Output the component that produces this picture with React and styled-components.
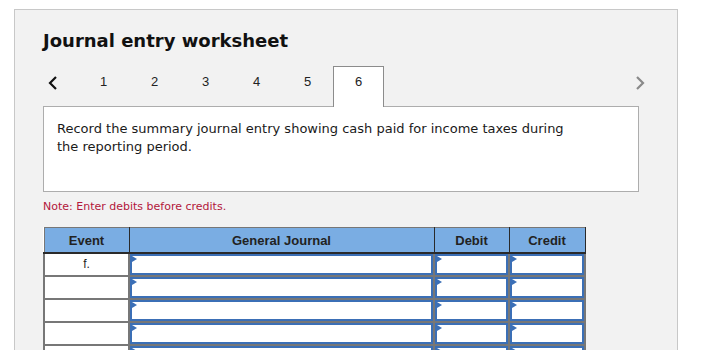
import React from "react";
import styled, { createGlobalStyle } from "styled-components";

const GlobalStyle = createGlobalStyle`
  html, body {
    margin: 0;
    padding: 0;
    overflow: hidden;
    background: #ffffff;
  }
`;

const Page = styled.div`
  padding: 9px 0 0 14px;
`;

const Panel = styled.div`
  width: 664px;
  height: 420px;
  box-sizing: border-box;
  border: 1px solid #c8c8c8;
  background: #f2f2f2;
  padding: 20px 0 0 28px;
`;

const Title = styled.h1`
  margin: 0;
  font-family: "DejaVu Sans", Verdana, sans-serif;
  font-size: 18px;
  line-height: 22px;
  font-weight: bold;
  color: #111;
`;

const TabRow = styled.div`
  display: flex;
  align-items: flex-start;
  margin-top: 14px;
  height: 40px;
  position: relative;
  z-index: 1;
`;

const Arrow = styled.button`
  border: none;
  background: none;
  padding: 0;
  width: 35px;
  height: 40px;
  display: flex;
  align-items: flex-start;
  padding-top: 10px;
  padding-left: ${(p) => (p.$right ? "0" : "4px")};
  box-sizing: border-box;
  cursor: pointer;
`;

const Tabs = styled.div`
  display: flex;
  width: 556px;
`;

const Tab = styled.div`
  width: 51px;
  height: ${(p) => (p.$active ? "41px" : "40px")};
  box-sizing: border-box;
  padding-top: 7px;
  text-align: center;
  font-family: "Liberation Sans", Arial, sans-serif;
  font-size: 13px;
  line-height: 16px;
  color: #222;
  border: 1px solid ${(p) => (p.$active ? "#8c8c8c" : "transparent")};
  border-bottom: none;
  background: ${(p) => (p.$active ? "#ffffff" : "transparent")};
`;

const Question = styled.div`
  width: 596px;
  height: 86px;
  box-sizing: border-box;
  border: 1px solid #adadad;
  background: #ffffff;
  padding: 13px 60px 0 13px;
  font-family: "DejaVu Sans", Verdana, sans-serif;
  font-size: 13px;
  line-height: 18px;
  color: #1a1a1a;
`;

const Note = styled.p`
  margin: 8px 0 0;
  font-family: "DejaVu Sans", Verdana, sans-serif;
  font-size: 11px;
  line-height: 14px;
  color: #b3163b;
`;

const Table = styled.table`
  margin-top: 13px;
  border-collapse: collapse;
  border: 1px solid #777;
  background: #ffffff;
  font-family: "Liberation Sans", Arial, sans-serif;
`;

const Th = styled.th`
  width: ${(p) => p.$w}px;
  height: 24px;
  padding: 0;
  background: #7aade3;
  border-right: 1px solid #2a2a2a;
  border-bottom: 2px solid #2a2a2a;
  font-size: 13px;
  font-weight: bold;
  color: #222;
`;

const Td = styled.td`
  height: 21px;
  padding: 0;
  border: 2px solid #777;
  font-size: 12px;
  text-align: center;
  color: #222;
  vertical-align: top;
`;

const EventCell = styled.div`
  height: 21px;
  line-height: 21px;
`;

const Field = styled.div`
  position: relative;
  height: 21px;
  box-sizing: border-box;
  border: 2px solid #3b6fb6;
  background: #ffffff;

  &::before {
    content: "";
    position: absolute;
    left: 0;
    top: 0;
    border-top: 3px solid transparent;
    border-bottom: 3px solid transparent;
    border-left: 5px solid #3b6fb6;
  }
`;

const Chevron = ({ dir, color }) => (
  <svg width="12" height="14" viewBox="0 0 12 14">
    <path
      d={dir === "left" ? "M9 1 L3 7 L9 13" : "M3 1 L9 7 L3 13"}
      fill="none"
      stroke={color}
      strokeWidth="2.2"
    />
  </svg>
);

const rows = ["f.", "", "", "", "", ""];

export default function App() {
  return (
    <Page>
      <GlobalStyle />
      <Panel>
        <Title>Journal entry worksheet</Title>
        <TabRow>
          <Arrow aria-label="previous">
            <Chevron dir="left" color="#111" />
          </Arrow>
          <Tabs>
            {[1, 2, 3, 4, 5, 6].map((n) => (
              <Tab key={n} $active={n === 6}>
                {n}
              </Tab>
            ))}
          </Tabs>
          <Arrow $right aria-label="next">
            <Chevron dir="right" color="#8a8a8a" />
          </Arrow>
        </TabRow>
        <Question>
          Record the summary journal entry showing cash paid for income taxes
          during the reporting period.
        </Question>
        <Note>Note: Enter debits before credits.</Note>
        <Table>
          <thead>
            <tr>
              <Th $w={84}>Event</Th>
              <Th $w={304}>General Journal</Th>
              <Th $w={74}>Debit</Th>
              <Th $w={75}>Credit</Th>
            </tr>
          </thead>
          <tbody>
            {rows.map((ev, i) => (
              <tr key={i}>
                <Td>
                  <EventCell>{ev}</EventCell>
                </Td>
                <Td>
                  <Field />
                </Td>
                <Td>
                  <Field />
                </Td>
                <Td>
                  <Field />
                </Td>
              </tr>
            ))}
          </tbody>
        </Table>
      </Panel>
    </Page>
  );
}
